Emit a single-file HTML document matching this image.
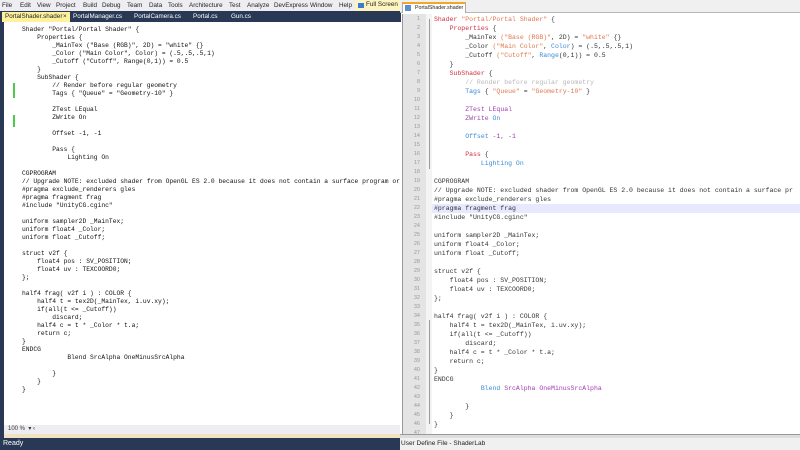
<!DOCTYPE html>
<html><head><meta charset="utf-8"><style>
*{margin:0;padding:0;box-sizing:border-box}
body{width:800px;height:450px;overflow:hidden;background:#fff;position:relative;font-family:"Liberation Sans",sans-serif}
.abs{position:absolute}
#menu{left:0;top:0;width:401px;height:11px;background:#eeeef2;font-size:6.3px;color:#222;white-space:nowrap}
#menu span{position:absolute;top:1.5px}
#tabs{left:0;top:11px;width:401px;height:11px;background:#293955}
.tab{position:absolute;top:1px;height:10px;font-size:6.3px;color:#fff;line-height:10px;white-space:nowrap}
#ledit{left:4px;top:22px;width:396px;height:403px;background:#fff}
#lborder{left:0;top:22px;width:4px;height:416px;background:#293955}
.code{position:absolute;font-family:"Liberation Mono",monospace;white-space:pre;color:#111}
#lcode{left:22px;top:26px;font-size:6.3px;line-height:8px}
#zoom{left:4px;top:425px;width:396px;height:9px;background:#eeeef2;font-size:6px;color:#333;padding-left:4px;line-height:9px}
#ybar{left:4px;top:434px;width:396px;height:4px;background:#efe4bf}
#lstat{left:0;top:438px;width:401px;height:12px;background:#293955;color:#fff;font-size:7px;line-height:12px;padding-left:3px}
#rtop{left:400px;top:0;width:400px;height:13px;background:#f0f0f0;border-bottom:1px solid #b8b8b8}
#rtab{left:402px;top:2px;width:64px;height:11px;background:#fff;border:1px solid #aaa;border-top:2px solid #f5a623;border-bottom:none;font-size:5.3px;line-height:9px;padding-left:12px;color:#222;white-space:nowrap;overflow:hidden}
#gutter{left:402px;top:14px;width:24px;height:420px;background:#e4e4e4;border-left:1px solid #999}
#fold{left:426px;top:14px;width:6px;height:420px;background:#f4f4f4}
#lnums{left:402px;top:14.5px;width:18px;text-align:right;font-size:5.5px;line-height:9px;color:#999;font-family:"Liberation Sans",sans-serif}
#curline{left:432px;top:203.5px;width:368px;height:9px;background:#e8e8ff}
#rcode{left:434px;top:14.5px;font-size:6.5px;line-height:9px;color:#333}
.k{color:#d03040}
.s{color:#e07850}
.b{color:#3a8ad8}
.p{color:#a040b0}
.c{color:#b8b8b8}
#rsep{left:400px;top:434px;width:400px;height:4px;background:#ddd;border-top:1px solid #999}
#rstat{left:400px;top:438px;width:400px;height:12px;background:#f0f0f0;font-size:6.5px;line-height:12px;padding-left:1px;color:#222}
.green{position:absolute;left:13px;width:2px;background:#4fc84f}
</style></head><body>
<div id="menu" class="abs">
<span style="left:2px">File</span><span style="left:20px">Edit</span><span style="left:37px">View</span><span style="left:56px">Project</span><span style="left:83px">Build</span><span style="left:102px">Debug</span><span style="left:127px">Team</span><span style="left:149px">Data</span><span style="left:168px">Tools</span><span style="left:189px">Architecture</span><span style="left:229px">Test</span><span style="left:247px">Analyze</span><span style="left:274px">DevExpress</span><span style="left:310px">Window</span><span style="left:339px">Help</span>
<span style="left:355px;top:0;height:11px;width:46px;background:#fdf4bf;padding-left:11px;line-height:10px">Full Screen</span>
<span style="left:358px;top:3px;width:6px;height:5px;background:#3a7bd5"></span>
</div>
<div id="tabs" class="abs">
<div class="tab" style="left:2px;width:68px;background:#fff29d;color:#222;padding-left:3px">PortalShader.shader <span style="position:absolute;left:61px">×</span></div>
<div class="tab" style="left:73px">PortalManager.cs</div>
<div class="tab" style="left:134px">PortalCamera.cs</div>
<div class="tab" style="left:193px">Portal.cs</div>
<div class="tab" style="left:231px">Gun.cs</div>
</div>
<div id="lborder" class="abs"></div>
<div id="ledit" class="abs"></div>
<div class="green" style="top:83px;height:15px"></div>
<div class="green" style="top:115px;height:12px"></div>
<div id="lcode" class="code">Shader "Portal/Portal Shader" {
    Properties {
        _MainTex ("Base (RGB)", 2D) = "white" {}
        _Color ("Main Color", Color) = (.5,.5,.5,1)
        _Cutoff ("Cutoff", Range(0,1)) = 0.5
    }
    SubShader {
        // Render before regular geometry
        Tags { "Queue" = "Geometry-10" }

        ZTest LEqual
        ZWrite On

        Offset -1, -1

        Pass {
            Lighting On

CGPROGRAM
// Upgrade NOTE: excluded shader from OpenGL ES 2.0 because it does not contain a surface program or both ve
#pragma exclude_renderers gles
#pragma fragment frag
#include "UnityCG.cginc"

uniform sampler2D _MainTex;
uniform float4 _Color;
uniform float _Cutoff;

struct v2f {
    float4 pos : SV_POSITION;
    float4 uv : TEXCOORD0;
};

half4 frag( v2f i ) : COLOR {
    half4 t = tex2D(_MainTex, i.uv.xy);
    if(all(t &lt;= _Cutoff))
        discard;
    half4 c = t * _Color * t.a;
    return c;
}
ENDCG
            Blend SrcAlpha OneMinusSrcAlpha

        }
    }
}</div>
<div id="zoom" class="abs">100 %&nbsp;&nbsp;▾ ‹</div>
<div id="ybar" class="abs"></div>
<div id="lstat" class="abs">Ready</div>

<div id="rtop" class="abs"></div>
<div id="rtab" class="abs">PortalShader.shader</div>
<div class="abs" style="left:405px;top:5px;width:6px;height:6px;background:#5b8fd0"></div>
<div id="gutter" class="abs"></div>
<div id="fold" class="abs"></div>
<div id="curline" class="abs"></div>
<div id="lnums" class="abs">1<br>2<br>3<br>4<br>5<br>6<br>7<br>8<br>9<br>10<br>11<br>12<br>13<br>14<br>15<br>16<br>17<br>18<br>19<br>20<br>21<br>22<br>23<br>24<br>25<br>26<br>27<br>28<br>29<br>30<br>31<br>32<br>33<br>34<br>35<br>36<br>37<br>38<br>39<br>40<br>41<br>42<br>43<br>44<br>45<br>46<br>47</div>
<div class="abs" style="left:429px;top:19px;width:1px;height:150px;background:#999"></div>
<div class="abs" style="left:429px;top:320px;width:1px;height:104px;background:#999"></div>
<div id="rcode" class="code"><span class="k">Shader</span> <span class="s">"Portal/Portal Shader"</span> {
    <span class="k">Properties</span> {
        _MainTex <span class="s">("Base (RGB)"</span>, 2D) = <span class="s">"white"</span> {}
        _Color <span class="s">("Main Color"</span>, <span class="b">Color</span>) = (.5,.5,.5,1)
        _Cutoff <span class="s">("Cutoff"</span>, <span class="b">Range</span>(0,1)) = 0.5
    }
    <span class="k">SubShader</span> {
        <span class="c">// Render before regular geometry</span>
        <span class="b">Tags</span> { <span class="s">"Queue"</span> = <span class="s">"Geometry-10"</span> }

        <span class="p">ZTest LEqual</span>
        <span class="p">ZWrite</span> <span class="b">On</span>

        <span class="b">Offset</span> <span class="p">-1, -1</span>

        <span class="k">Pass</span> {
            <span class="b">Lighting On</span>

CGPROGRAM
// Upgrade NOTE: excluded shader from OpenGL ES 2.0 because it does not contain a surface pr
#pragma exclude_renderers gles
#pragma fragment frag
#include "UnityCG.cginc"

uniform sampler2D _MainTex;
uniform float4 _Color;
uniform float _Cutoff;

struct v2f {
    float4 pos : SV_POSITION;
    float4 uv : TEXCOORD0;
};

half4 frag( v2f i ) : COLOR {
    half4 t = tex2D(_MainTex, i.uv.xy);
    if(all(t &lt;= _Cutoff))
        discard;
    half4 c = t * _Color * t.a;
    return c;
}
ENDCG
            <span class="b">Blend</span> <span class="p">SrcAlpha OneMinusSrcAlpha</span>

        }
    }
}</div>
<div id="rsep" class="abs"></div>
<div id="rstat" class="abs">User Define File - ShaderLab</div>
</body></html>
